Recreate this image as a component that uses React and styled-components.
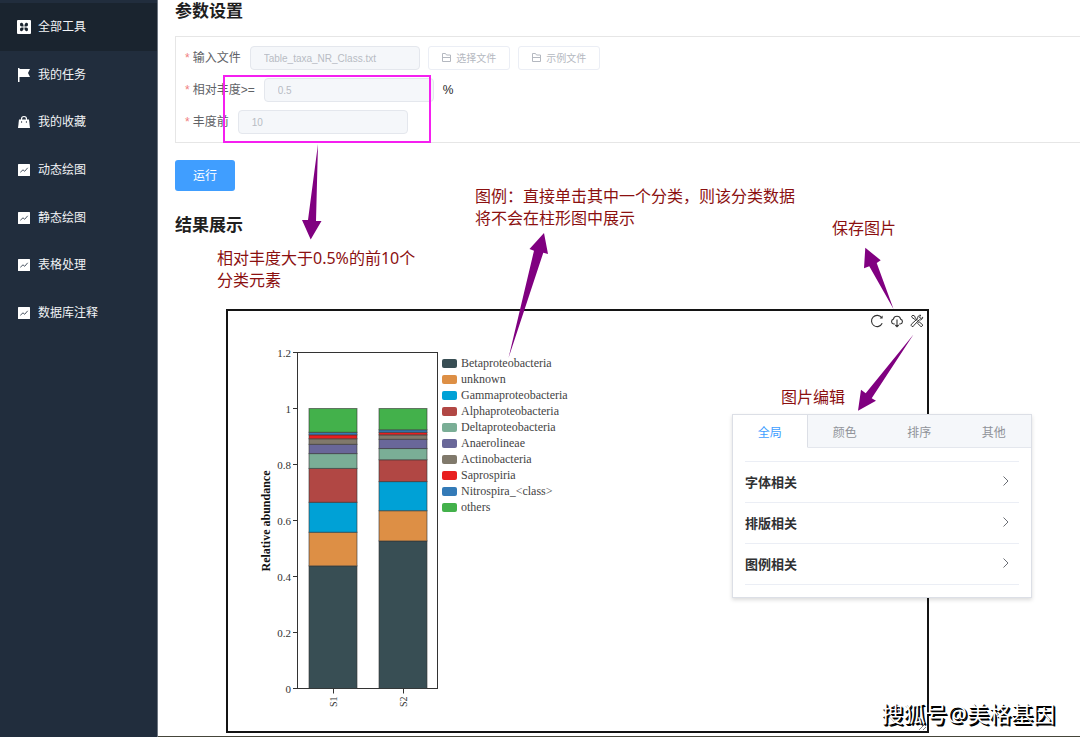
import React from "react";
import styled, { createGlobalStyle } from "styled-components";

const GlobalStyle = createGlobalStyle`
  *, *::before, *::after { box-sizing: border-box; }
  body {
    margin: 0;
    background: #fff;
    color: #1f1f1f;
    font-family: "Liberation Sans", "Noto Sans CJK SC", sans-serif;
    font-size: 12px;
  }
  button, input { font-family: inherit; margin: 0; }
`;

const Page = styled.div`
  display: flex;
  min-height: 100vh;
`;

const Sidebar = styled.nav`
  flex: none;
  width: 158px;
  padding-top: 3px;
  background: #212d3d;
  border-right: 1px solid #6d7580;
`;

const NavList = styled.ul`
  display: grid;
  grid-auto-rows: 1fr;
  height: 333px;
  margin: 0;
  padding: 0;
  list-style: none;
`;

const NavLink = styled.a`
  display: flex;
  align-items: center;
  gap: 7px;
  height: 100%;
  padding: 1px 0 0 17px;
  background: ${(p) => (p.$active ? "#1a242f" : "transparent")};
  color: #f2f4f6;
  line-height: 16px;
  text-decoration: none;

  svg { flex: none; }
`;

const Main = styled.main`
  position: relative;
  flex: 1;
  min-width: 0;
  padding: 2px 0 3px 17px;
  border-bottom: 1px solid #45453a;
`;

const Heading = styled.h2`
  margin: 0;
  font-size: 17px;
  line-height: 20px;
  font-weight: 700;
`;

const ParamForm = styled.form`
  position: relative;
  display: flex;
  flex-direction: column;
  gap: 8px;
  margin: 14px 0 17px;
  padding: 9px 9px 8px;
  border: 1px solid #e6e6e6;
  border-right: 0;
`;

const Field = styled.div`
  display: flex;
  align-items: center;
  height: 24px;
`;

const FieldLabel = styled.label`
  display: flex;
  gap: 3px;
  margin-right: 9px;
  color: #606266;
  line-height: 16px;

  &::before {
    content: "*";
    color: #f08080;
  }
`;

const TextInput = styled.input`
  width: 170px;
  height: 24px;
  padding: 0 13px;
  border: 1px solid #e4e7ed;
  border-radius: 4px;
  background: #f5f7fa;
  color: #b8bcc4;
  font-size: 10px;
`;

const Unit = styled.span`
  margin-left: 9px;
`;

const FileButton = styled.button`
  display: flex;
  align-items: center;
  justify-content: center;
  gap: 4px;
  width: 82px;
  height: 24px;
  margin-left: 8px;
  padding: 0 0 2px;
  border: 1px solid #ebeef5;
  border-radius: 3px;
  background: #fff;
  color: #b4b8c0;
  font-size: 10px;
`;

const RunButton = styled.button`
  display: block;
  width: 60px;
  height: 31px;
  margin-bottom: 25px;
  padding: 0 0 2px;
  border: 0;
  border-radius: 3px;
  background: #409eff;
  color: #fff;
  font-size: 12px;
`;

const Highlight = styled.div`
  position: absolute;
  left: 47px;
  top: 38px;
  width: 208px;
  height: 68px;
  border: 2px solid #f51ff0;
  pointer-events: none;
`;

const ChartFrame = styled.section`
  position: relative;
  display: flex;
  align-items: flex-start;
  margin: 73px 151px 0 51px;
  border: 2px solid #141414;
`;

const Plot = styled.svg`
  flex: none;
  display: block;
  font-family: "Liberation Serif", serif;
`;

const Legend = styled.ul`
  margin: 0;
  padding: 44px 0 0;
  list-style: none;
`;

const LegendButton = styled.button`
  display: flex;
  align-items: center;
  gap: 4px;
  height: 16px;
  padding: 0;
  border: 0;
  background: none;
  color: #444;
  font-family: "Liberation Serif", serif;
  font-size: 12px;
  line-height: 16px;
`;

const Swatch = styled.span`
  width: 15px;
  height: 9px;
  border-radius: 2px;
  background: ${(p) => p.$color};
`;

const Toolbar = styled.div`
  display: flex;
  gap: 6px;
  margin-left: auto;
  padding: 3px 3px 0 0;
`;

const ToolButton = styled.button`
  width: 14px;
  height: 14px;
  padding: 0;
  border: 0;
  background: none;
  color: #333;

  svg { display: block; }
`;

const ResizeGrip = styled.svg`
  position: absolute;
  right: 0;
  bottom: 0;
`;

const Note = styled.p`
  position: absolute;
  z-index: 2;
  left: ${(p) => (p.$left === undefined ? "auto" : `${p.$left}px`)};
  right: ${(p) => (p.$right === undefined ? "auto" : `${p.$right}px`)};
  top: ${(p) => p.$top}px;
  margin: 0;
  color: #8b1010;
  font-family: "Noto Sans", "Noto Sans CJK SC", sans-serif;
  font-size: 16px;
  line-height: 22px;
  white-space: nowrap;
`;

const ArrowSvg = styled.svg`
  position: absolute;
  z-index: 2;
  left: ${(p) => (p.$left === undefined ? "auto" : `${p.$left}px`)};
  right: ${(p) => (p.$right === undefined ? "auto" : `${p.$right}px`)};
  top: ${(p) => p.$top}px;
  fill: #800080;
  pointer-events: none;
`;

const EditPanel = styled.div`
  position: absolute;
  z-index: 1;
  top: 103px;
  right: -105px;
  width: 300px;
  border: 1px solid #dcdfe6;
  background: #fff;
  box-shadow: 0 2px 4px rgba(0, 0, 0, 0.14);
`;

const TabBar = styled.div`
  display: grid;
  grid-template-columns: repeat(4, 1fr);
  background: #f5f7fa;
`;

const Tab = styled.button`
  height: 33px;
  padding: 0;
  border: 0;
  border-bottom: 1px solid ${(p) => (p.$active ? "#fff" : "#e4e7ed")};
  border-right: ${(p) => (p.$active ? "1px solid #dcdfe6" : "0")};
  background: ${(p) => (p.$active ? "#fff" : "transparent")};
  color: ${(p) => (p.$active ? "#409eff" : "#909399")};
  font-size: 12px;
`;

const Sections = styled.div`
  margin: 13px 12px 12px;
  border-top: 1px solid #ebeef5;
`;

const SectionButton = styled.button`
  display: flex;
  align-items: center;
  justify-content: space-between;
  width: 100%;
  height: 41px;
  padding: 0 9px 2px 0;
  border: 0;
  border-bottom: 1px solid #ebeef5;
  background: none;
  color: #303133;
  font-size: 13px;
  font-weight: 700;
`;

const Watermark = styled.div`
  position: absolute;
  z-index: 3;
  right: 25px;
  bottom: 9px;
  color: #fff;
  font-family: "Noto Sans", "Noto Sans CJK SC", sans-serif;
  font-size: 22px;
  line-height: 28px;
  text-shadow: 1px 1px 0 #000, 2px 2px 0 #000;
`;

const GridIcon = () => (
  <svg width="14" height="14" viewBox="0 0 14 14">
    <rect width="14" height="14" rx="1" fill="#fff" />
    <g fill="#1a242f">
      <path d="M3 4.500a1.500 1.500 0 0 1 3-.3q.5 0 .5.500V6.500H4.800A1.800 1.800 0 0 1 3 4.500zM11 4.500a1.500 1.500 0 0 0-3-.3q-.5 0-.5.500V6.500h1.700A1.800 1.800 0 0 0 11 4.500zM3 9.500a1.500 1.500 0 0 0 3 .3q.5 0 .5-.5V7.500H4.800A1.800 1.800 0 0 0 3 9.500zM11 9.500a1.500 1.500 0 0 1-3 .3q-.5 0-.5-.5V7.500h1.700A1.800 1.800 0 0 1 11 9.500z" />
    </g>
  </svg>
);

const FlagIcon = () => (
  <svg width="14" height="14" viewBox="0 0 14 14" fill="#fff">
    <path d="M1 0h1.500v1H13l-2 4 2 4H2.500v5H1z" />
  </svg>
);

const BagIcon = () => (
  <svg width="14" height="14" viewBox="0 0 14 14">
    <path d="M2 4.500h10l1 8.500H1z" fill="#fff" />
    <path d="M4.500 5V4a2.500 2.500 0 0 1 5 0v1" fill="none" stroke="#fff" strokeWidth="1.200" />
    <path d="M4.600 6.300v1.400M9.400 6.300v1.400" stroke="#212d3d" strokeWidth="1" />
  </svg>
);

const TrendIcon = () => (
  <svg width="14" height="14" viewBox="0 0 14 14">
    <rect x="1" y="1" width="12" height="12" rx="0.500" fill="#fff" />
    <path d="M3.300 9.300 6 6.800l1.700 1.500 3-3.500" fill="none" stroke="#4a5563" strokeWidth="1" />
  </svg>
);

const FolderIcon = () => (
  <svg width="11" height="11" viewBox="0 0 11 11" fill="none" stroke="currentColor">
    <path d="M1.500 9.500v-8h3l1 1.500h4v6.500zM1.500 5.500h8" />
  </svg>
);

const RefreshIcon = () => (
  <svg width="14" height="14" viewBox="0 0 14 14" fill="none" stroke="currentColor" strokeWidth="1.100">
    <path d="M12.200 9.300A5.600 5.600 0 1 1 11.600 3.600" />
    <path d="M12.600 1.600v2.900H9.700z" fill="currentColor" stroke="none" />
  </svg>
);

const DownloadIcon = () => (
  <svg width="14" height="14" viewBox="0 0 14 14" fill="none" stroke="currentColor" strokeWidth="1.100">
    <path d="M4.800 10H3.800A2.500 2.500 0 0 1 3.400 5.100 3.700 3.700 0 0 1 10.600 5.100 2.500 2.500 0 0 1 10.200 10H9.200" />
    <path d="M7 5.500v7M5.300 11l1.700 1.700L8.700 11" />
  </svg>
);

const ToolsIcon = () => (
  <svg width="14" height="14" viewBox="0 0 14 14" fill="none" stroke="currentColor" strokeWidth="1">
    <path d="M1.500 2.300 3 1.200l2 1.300.3 1.400L8 6.600M1.500 2.300l1.300 2 1.400.4L6.300 7" />
    <path d="M8.200 8.400 9 7.600l3.900 3.500-1.700 1.800-3.700-3.700z" />
    <path d="M12.700 3.200a2.600 2.600 0 0 1-3.500 2.600L4 11.300a1.700 1.700 0 0 1-2 1.200 1.700 1.700 0 0 1-.6-2.300L7.700 4.500A2.700 2.700 0 0 1 11 1.300L9.600 2.700l.4 1.400 1.400.3z" />
  </svg>
);

const ChevronIcon = () => (
  <svg width="8" height="12" viewBox="0 0 8 12" fill="none" stroke="#6b6e75">
    <path d="M1.500 1.500 6 6l-4.500 4.500" />
  </svg>
);

const navItems = [
  { label: "全部工具", Icon: GridIcon, active: true },
  { label: "我的任务", Icon: FlagIcon },
  { label: "我的收藏", Icon: BagIcon },
  { label: "动态绘图", Icon: TrendIcon },
  { label: "静态绘图", Icon: TrendIcon },
  { label: "表格处理", Icon: TrendIcon },
  { label: "数据库注释", Icon: TrendIcon },
];

const series = [
  { name: "Betaproteobacteria", color: "#384e54", values: [0.438, 0.527] },
  { name: "unknown", color: "#dd8f45", values: [0.12, 0.108] },
  { name: "Gammaproteobacteria", color: "#00a1d6", values: [0.107, 0.104] },
  { name: "Alphaproteobacteria", color: "#b14744", values: [0.121, 0.078] },
  { name: "Deltaproteobacteria", color: "#7aae96", values: [0.053, 0.04] },
  { name: "Anaerolineae", color: "#696799", values: [0.033, 0.033] },
  { name: "Actinobacteria", color: "#80796b", values: [0.02, 0.016] },
  { name: "Saprospiria", color: "#e81f1f", values: [0.014, 0.009] },
  { name: "Nitrospira_<class>", color: "#337ab7", values: [0.009, 0.009] },
  { name: "others", color: "#43b14b", values: [0.085, 0.076] },
];

const samples = [
  { name: "S1", x: 81 },
  { name: "S2", x: 151 },
];

const BASE = 377.5;
const UNIT = 280;

function BarChart() {
  return (
    <Plot width="214" height="420" viewBox="0 0 214 420" role="img" aria-label="Relative abundance">
      <rect x="69.500" y="41.500" width="140" height="336" fill="none" stroke="#333" />
      {["0", "0.2", "0.4", "0.6", "0.8", "1", "1.2"].map((tick, i) => (
        <g key={tick}>
          <path d={`M65 ${BASE - i * 56}h5`} stroke="#333" />
          <text x="63" y={BASE - i * 56 + 4} textAnchor="end" fontSize="11" fill="#333">{tick}</text>
        </g>
      ))}
      {samples.map((sample, s) => {
        let total = 0;
        return (
          <g key={sample.name}>
            {series.map((item) => {
              total += item.values[s];
              return (
                <rect
                  key={item.name}
                  x={sample.x}
                  y={BASE - total * UNIT}
                  width="48"
                  height={item.values[s] * UNIT}
                  fill={item.color}
                  stroke="#333"
                  strokeOpacity="0.600"
                />
              );
            })}
            <path d={`M${sample.x + 24.5} ${BASE}v5`} stroke="#333" />
            <text transform={`translate(${sample.x + 28} 396) rotate(-90)`} fontSize="10" fill="#333">{sample.name}</text>
          </g>
        );
      })}
      <text transform="translate(42 210) rotate(-90)" textAnchor="middle" fontSize="12" fontWeight="700" fill="#111">
        Relative abundance
      </text>
    </Plot>
  );
}

export default function App() {
  return (
    <Page>
      <GlobalStyle />
      <Sidebar>
        <NavList>
          {navItems.map(({ label, Icon, active }) => (
            <li key={label}>
              <NavLink href="#" $active={active}>
                <Icon />
                {label}
              </NavLink>
            </li>
          ))}
        </NavList>
      </Sidebar>

      <Main>
        <Heading>参数设置</Heading>
        <ParamForm>
          <Field>
            <FieldLabel htmlFor="file">输入文件</FieldLabel>
            <TextInput id="file" defaultValue="Table_taxa_NR_Class.txt" disabled />
            <FileButton type="button" disabled><FolderIcon />选择文件</FileButton>
            <FileButton type="button" disabled><FolderIcon />示例文件</FileButton>
          </Field>
          <Field>
            <FieldLabel htmlFor="abundance">相对丰度&gt;=</FieldLabel>
            <TextInput id="abundance" defaultValue="0.5" disabled />
            <Unit>%</Unit>
          </Field>
          <Field>
            <FieldLabel htmlFor="top">丰度前</FieldLabel>
            <TextInput id="top" defaultValue="10" disabled />
          </Field>
          <Highlight />
        </ParamForm>
        <RunButton type="button">运行</RunButton>

        <Heading>结果展示</Heading>
        <ChartFrame>
          <BarChart />
          <Legend>
            {series.map((item) => (
              <li key={item.name}>
                <LegendButton type="button">
                  <Swatch $color={item.color} />
                  {item.name}
                </LegendButton>
              </li>
            ))}
          </Legend>
          <Toolbar>
            <ToolButton type="button" aria-label="刷新"><RefreshIcon /></ToolButton>
            <ToolButton type="button" aria-label="保存图片"><DownloadIcon /></ToolButton>
            <ToolButton type="button" aria-label="图片编辑"><ToolsIcon /></ToolButton>
          </Toolbar>
          <ResizeGrip width="9" height="9" viewBox="0 0 9 9" stroke="#888">
            <path d="M1 8 8 1M5 8l3-3" />
          </ResizeGrip>

          <EditPanel>
            <TabBar role="tablist">
              {["全局", "颜色", "排序", "其他"].map((tab, i) => (
                <Tab key={tab} type="button" role="tab" aria-selected={i === 0} $active={i === 0}>{tab}</Tab>
              ))}
            </TabBar>
            <Sections>
              {["字体相关", "排版相关", "图例相关"].map((name) => (
                <SectionButton key={name} type="button">
                  {name}
                  <ChevronIcon />
                </SectionButton>
              ))}
            </Sections>
          </EditPanel>

          <Note $right={31} $top={-94}>保存图片</Note>
          <Note $right={82} $top={75}>图片编辑</Note>
          <ArrowSvg $right={13} $top={-64} width="56" height="164" viewBox="0 0 56 164">
            <path d="M35.500 62 11.300 19.300 6 21.300 7.300.700 22.700 13.300 18.700 16z" />
            <path d="M55.500 87.500 13.700 151.300 18 153.700 0 163.700 3 142.700 7.700 146.300z" />
          </ArrowSvg>
        </ChartFrame>

        <Note $left={59} $top={247}>相对丰度大于0.5%的前10个<br />分类元素</Note>
        <Note $left={317} $top={185}>图例：直接单击其中一个分类，则该分类数据<br />将不会在柱形图中展示</Note>
        <ArrowSvg $left={144} $top={144} width="20" height="96" viewBox="0 0 20 96">
          <path d="M16 0 14 77 19.500 77 8.700 95.500 0 76 6 76z" />
        </ArrowSvg>
        <ArrowSvg $left={350} $top={233} width="41" height="125" viewBox="0 0 41 125">
          <path d="M.500 125 26 17.700 21.500 16 36 0 40 21 35.300 19.700z" />
        </ArrowSvg>
        <Watermark>搜狐号@美格基因</Watermark>
      </Main>
    </Page>
  );
}
